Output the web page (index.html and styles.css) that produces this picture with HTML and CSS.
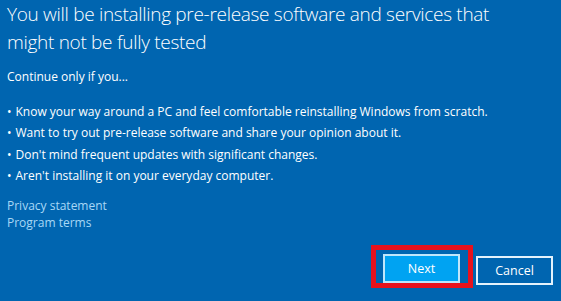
FILE: index.html
```html
<!DOCTYPE html>
<html lang="en">
<head>
    <meta charset="UTF-8">
    <title>Windows Insider Program</title>
    <link rel="stylesheet" href="styles.css">
</head>
<body>

    <div class="dialog">
        <h1>You will be installing pre-release software and services that might not be fully tested</h1>
        <p class="intro">Continue only if you...</p>

        <ul class="conditions">
            <li>Know your way around a PC and feel comfortable reinstalling Windows from scratch.</li>
            <li>Want to try out pre-release software and share your opinion about it.</li>
            <li>Don't mind frequent updates with significant changes.</li>
            <li>Aren't installing it on your everyday computer.</li>
        </ul>

        <div class="links">
            <a href="#">Privacy statement</a>
            <a href="#">Program terms</a>
        </div>

        <div class="actions">
            <div class="highlight">
                <button class="btn primary">Next</button>
            </div>
            <button class="btn">Cancel</button>
        </div>
    </div>

</body>
</html>
```

FILE: styles.css
```css
/* General Styles */
body, html {
    margin: 0;
    padding: 0;
    height: 100%;
    background-color: #0065b0;
    color: #fff;
    font-family: 'Open Sans', 'Noto Sans', sans-serif;
    overflow: hidden;
}

.dialog {
    padding: 0 8px 0 7px;
}

h1 {
    font-size: 19px;
    font-weight: 300;
    line-height: 28px;
    margin: 0;
    max-width: 495px;
    letter-spacing: -0.3px;
}

.intro {
    font-size: 12px;
    margin: 12px 0 0;
    line-height: 17px;
}

/* Bullet list */
.conditions {
    list-style: none;
    margin: 16px 0 0;
    padding: 0;
}

.conditions li {
    font-size: 12px;
    line-height: 21.4px;
}

.conditions li::before {
    content: "\2022";
    margin-right: 4px;
}

/* Links */
.links {
    margin-top: 10px;
    display: flex;
    flex-direction: column;
}

.links a {
    color: #a8d8f6;
    text-decoration: none;
    font-size: 12px;
    line-height: 17px;
}

/* Buttons */
.actions {
    display: flex;
    justify-content: flex-end;
    align-items: flex-end;
    gap: 3px;
    margin-top: 14px;
}

.highlight {
    border: 5px solid #e8121d;
    padding: 4px 8px 0 7px;
}

.btn {
    width: 77px;
    height: 29px;
    box-sizing: border-box;
    border: 2px solid #e4f2fc;
    background-color: #0065b0;
    color: #fff;
    font-family: inherit;
    font-size: 12.5px;
    padding: 0;
    margin-bottom: 3px;
}

.btn.primary {
    background-color: #00a3f2;
    border-color: #bfe6fb;
    margin-bottom: 0;
}
```
